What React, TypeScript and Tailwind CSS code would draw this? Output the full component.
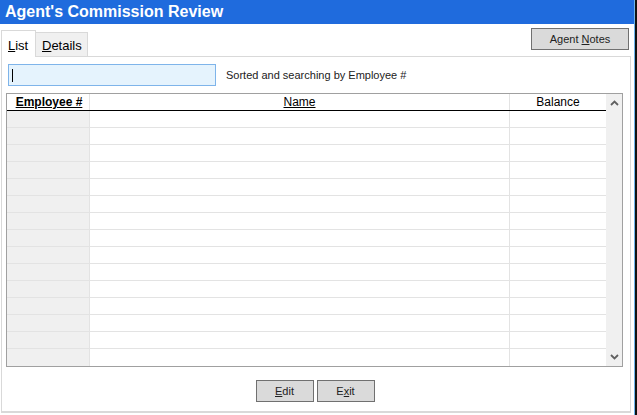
import React from "react";

const rows = Array.from({ length: 15 }, (_, i) => i);

function Chevron({ up }: { up?: boolean }) {
  return (
    <svg width="9" height="6" viewBox="0 0 9 6" className="block">
      <path
        d={up ? "M1 5 L4.5 1.5 L8 5" : "M1 1 L4.5 4.5 L8 1"}
        fill="none"
        stroke="#606060"
        strokeWidth="1.8"
      />
    </svg>
  );
}

function WinButton({ label, accel, className }: { label: string; accel: number; className: string }) {
  return (
    <button
      type="button"
      className={`flex items-center justify-center border border-[#707070] bg-[#dadada] text-[11px] text-[#222] ${className}`}
    >
      <span className="whitespace-pre">
        {label.slice(0, accel)}
        <span className="underline">{label[accel]}</span>
        {label.slice(accel + 1)}
      </span>
    </button>
  );
}

export default function App() {
  return (
    <div className="flex h-[415px] w-[637px] overflow-hidden bg-white font-['Liberation_Sans',Arial,sans-serif]">
      <div className="flex w-[634px] flex-col">
        <div className="flex h-[24px] items-center bg-[#1f6bdd] pl-[5px] text-[16px] font-bold text-white">
          Agent's Commission Review
        </div>

        {/* tab strip */}
        <div className="flex h-[32px] items-end">
          <div className="relative z-10 -mb-px ml-px flex h-[27px] w-[35px] items-start border-x border-t border-[#d9d9d9] bg-white pl-[6px] pt-[5px] text-[13px] text-black">
            <span className="underline">L</span>ist
          </div>
          <div className="flex h-[24px] w-[52px] items-start border-r border-t border-[#d9d9d9] bg-[#f0f0f0] pl-[6px] pt-[3px] text-[13px] text-black">
            <span className="underline">D</span>etails
          </div>
          <div className="flex-1" />
          <WinButton label="Agent Notes" accel={6} className="mb-[6px] mr-[5px] h-[22px] w-[98px] self-end" />
        </div>

        {/* panel */}
        <div className="ml-px flex h-[357px] w-[630px] flex-col border border-b-2 border-[#d9d9d9] bg-white">
          <div className="ml-[6px] mt-[7px] flex items-center">
            <div className="flex h-[22px] w-[208px] items-center border border-[#7eb4ea] bg-[#e5f3fd] pl-[3px]">
              <div className="h-[13px] w-px bg-black" />
            </div>
            <span className="ml-[10px] text-[11px] text-[#222]">Sorted and searching by Employee #</span>
          </div>

          {/* grid */}
          <div className="ml-[4px] mt-[7px] flex h-[274px] w-[617px] border border-[#a0a0a0]">
            <div className="flex w-[599px] flex-col">
              <div className="flex h-[17px] border-b border-black text-[12px] text-black">
                <div className="flex w-[83px] items-center justify-center border-r border-[#e3e3e3] pl-[2px] font-bold underline">
                  Employee #
                </div>
                <div className="flex w-[420px] items-center justify-center border-r border-[#e3e3e3] underline">Name</div>
                <div className="flex w-[96px] items-center justify-center">Balance</div>
              </div>
              {rows.map((r) => (
                <div key={r} className={`flex h-[17px] ${r < 14 ? "border-b border-[#e3e3e3]" : ""}`}>
                  <div className="w-[83px] border-r border-[#e3e3e3] bg-[#f0f0f0]" />
                  <div className="w-[420px] border-r border-[#e3e3e3]" />
                  <div className="w-[96px]" />
                </div>
              ))}
            </div>
            <div className="flex w-[16px] flex-col items-center justify-between bg-[#f0f0f0] pb-[6px] pt-[6px]">
              <Chevron up />
              <Chevron />
            </div>
          </div>

          <div className="mt-[13px] flex justify-center gap-[3px] pr-[2px]">
            <WinButton label="Edit" accel={0} className="h-[22px] w-[58px]" />
            <WinButton label="Exit" accel={1} className="h-[22px] w-[58px]" />
          </div>
        </div>
      </div>
      <div className="w-px bg-[#6cb4ec]" />
      <div className="w-[2px] bg-[#111]" />
    </div>
  );
}
